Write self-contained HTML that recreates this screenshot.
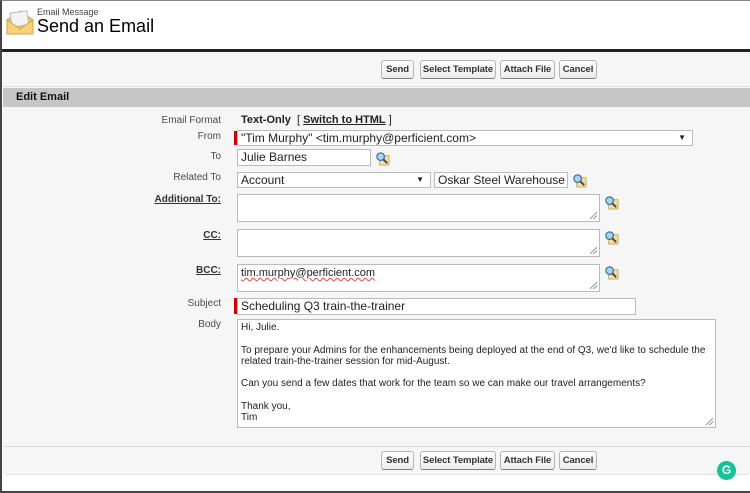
<!DOCTYPE html>
<html><head><style>
*{box-sizing:border-box;margin:0;padding:0}
body{width:750px;height:493px;background:#fff;font-family:"Liberation Sans",Arial,sans-serif;position:relative;overflow:hidden}
.frame{position:absolute;left:0;top:0;width:750px;height:493px;border-left:2px solid #444;border-bottom:2px solid #444;border-top:1px solid #888}
.abs{position:absolute}
.panel{position:absolute;left:3px;top:52px;width:747px;height:423px;background:#f6f6f6;border-bottom:1px solid #e3e3e3;border-radius:0 0 4px 4px}
.btn{position:absolute;height:19px;border:1px solid #b5b5b5;border-bottom-color:#7f7f7f;border-radius:3px;background:linear-gradient(#fff,#ececec);font-size:9.5px;font-weight:bold;color:#333;text-align:center;line-height:17px;white-space:nowrap;overflow:hidden;letter-spacing:-0.1px}
.lbl{position:absolute;right:529px;font-size:10px;color:#4a4a4a;text-align:right;white-space:nowrap}
.lbl.u{font-weight:bold;text-decoration:underline;color:#333}
.in{position:absolute;background:#fff;border:1px solid #bbb;font-size:12px;color:#222;padding-left:3px;white-space:nowrap;overflow:hidden}
.req{position:absolute;width:3px;background:#c00}
.lk{position:absolute;width:15px;height:15px}
.grip{position:absolute;right:2px;bottom:2px;width:7px;height:7px;background:linear-gradient(135deg,transparent 45%,#999 45%,#999 55%,transparent 55%,transparent 70%,#999 70%,#999 80%,transparent 80%)}
</style></head><body>
<div class="frame"></div>
<svg class="abs" style="left:5px;top:8px" width="30" height="28" viewBox="0 0 30 28">
<path d="M2 12 L15 3 L28 12 L28 26 L2 26 Z" fill="#f4c56a" stroke="#d9a040"/>
<rect x="6" y="4" width="17" height="14" fill="#f4f4f4" stroke="#bbb" transform="rotate(-8 14 11)"/>
<path d="M2 12 L15 21 L28 12 L28 26 L2 26 Z" fill="#f8d27a" stroke="#d9a040"/>
</svg>
<div class="abs" style="left:37px;top:7px;font-size:9px;color:#444">Email Message</div>
<div class="abs" style="left:37px;top:16px;font-size:18px;color:#000">Send an Email</div>
<div class="abs" style="left:2px;top:49px;width:748px;height:3px;background:#222"></div>
<div class="panel"></div>
<div class="btn" style="left:381px;top:60px;width:33px">Send</div>
<div class="btn" style="left:420px;top:60px;width:76px">Select Template</div>
<div class="btn" style="left:500px;top:60px;width:55px">Attach File</div>
<div class="btn" style="left:559px;top:60px;width:38px">Cancel</div>
<div class="abs" style="left:3px;top:86px;width:747px;height:1px;background:#e0e0e0"></div>
<div class="abs" style="left:3px;top:88px;width:747px;height:19px;background:#c6c6c6;font-size:11px;font-weight:bold;color:#111;padding:3px 0 0 13px">Edit Email</div>
<div class="lbl" style="top:115px">Email Format</div>
<div class="abs" style="left:241px;top:114px;font-size:11px;color:#222"><b>Text-Only</b>&nbsp; [ <b><u>Switch to HTML</u></b> ]</div>
<div class="lbl" style="top:131px">From</div>
<div class="req" style="left:234px;top:131px;height:14px"></div>
<div class="in" style="left:237px;top:130px;width:456px;height:16px;line-height:14px">"Tim Murphy" &lt;tim.murphy@perficient.com&gt;<span style="position:absolute;right:6px;font-size:8px">▼</span></div>
<div class="lbl" style="top:151px">To</div>
<div class="in" style="left:237px;top:149px;width:134px;height:17px;line-height:15px">Julie Barnes</div>
<div class="lbl" style="top:172px">Related To</div>
<div class="in" style="left:237px;top:172px;width:194px;height:16px;line-height:14px">Account<span style="position:absolute;right:6px;font-size:8px">▼</span></div>
<div class="in" style="left:434px;top:172px;width:134px;height:16px;line-height:14px">Oskar Steel Warehouse</div>
<div class="lbl u" style="top:194px">Additional To:</div>
<div class="in" style="left:237px;top:194px;width:363px;height:28px"><div class="grip"></div></div>
<div class="lbl u" style="top:230px">CC:</div>
<div class="in" style="left:237px;top:229px;width:363px;height:28px"><div class="grip"></div></div>
<div class="lbl u" style="top:265px">BCC:</div>
<div class="in" style="left:237px;top:264px;width:363px;height:28px;font-size:11px;padding-top:2px"><span style="text-decoration:underline wavy #e44;text-decoration-thickness:1px">tim.murphy@perficient.com</span><div class="grip"></div></div>
<div class="lbl" style="top:298px">Subject</div>
<div class="req" style="left:234px;top:298px;height:16px"></div>
<div class="in" style="left:237px;top:298px;width:399px;height:17px;line-height:15px">Scheduling Q3 train-the-trainer</div>
<div class="lbl" style="top:319px">Body</div>
<div class="in" style="left:237px;top:319px;width:479px;height:109px;font-size:10px;line-height:11.3px;padding:2px 3px">Hi, Julie.<br><br>To prepare your Admins for the enhancements being deployed at the end of Q3, we'd like to schedule the<br>related train-the-trainer session for mid-August.<br><br>Can you send a few dates that work for the team so we can make our travel arrangements?<br><br>Thank you,<br>Tim<div class="grip"></div></div>
<svg width="0" height="0" style="position:absolute"><defs><g id="lk"><rect x="5" y="5" width="10" height="10" fill="#f3dd9a" stroke="#b9a060" stroke-width=".8"/><circle cx="6" cy="6" r="4" fill="#a9d4f0" stroke="#3a6f9a" stroke-width="1.3"/><path d="M9 9 L13 13" stroke="#444" stroke-width="2"/></g></defs></svg>
<svg class="lk" style="left:375px;top:151px" viewBox="0 0 16 16"><use href="#lk"/></svg>
<svg class="lk" style="left:572px;top:173px" viewBox="0 0 16 16"><use href="#lk"/></svg>
<svg class="lk" style="left:604px;top:195px" viewBox="0 0 16 16"><use href="#lk"/></svg>
<svg class="lk" style="left:604px;top:230px" viewBox="0 0 16 16"><use href="#lk"/></svg>
<svg class="lk" style="left:604px;top:265px" viewBox="0 0 16 16"><use href="#lk"/></svg>
<div class="abs" style="left:3px;top:446px;width:747px;height:1px;background:#dcdcdc"></div>
<div class="btn" style="left:381px;top:451px;width:33px">Send</div>
<div class="btn" style="left:420px;top:451px;width:76px">Select Template</div>
<div class="btn" style="left:500px;top:451px;width:55px">Attach File</div>
<div class="btn" style="left:559px;top:451px;width:38px">Cancel</div>
<div class="abs" style="left:717px;top:461px;width:19px;height:19px;border-radius:50%;background:#15c39a;color:#fff;font-size:12px;font-weight:bold;text-align:center;line-height:19px">G</div>
</body></html>
